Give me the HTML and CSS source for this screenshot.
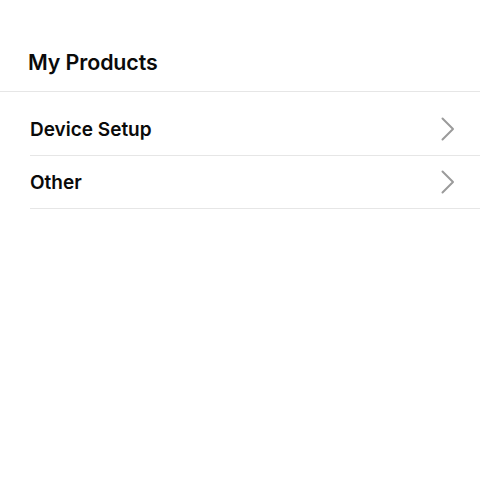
FILE: index.html
```html
<!DOCTYPE html>
<html>
<head>
<meta charset="utf-8">
<link rel="stylesheet" href="styles.css">
</head>
<body>
<header class="header"><h1 class="title">My Products</h1></header>
<ul class="list">
  <li class="row"><span class="label">Device Setup</span>
    <svg class="chev" width="14" height="24" viewBox="0 0 14 24"><path d="M1.5 1.5 L12 12 L1.5 22.5" fill="none" stroke="#9b9b9b" stroke-width="2" stroke-linecap="round" stroke-linejoin="round"/></svg>
  </li>
  <li class="row"><span class="label">Other</span>
    <svg class="chev" width="14" height="24" viewBox="0 0 14 24"><path d="M1.5 1.5 L12 12 L1.5 22.5" fill="none" stroke="#9b9b9b" stroke-width="2" stroke-linecap="round" stroke-linejoin="round"/></svg>
  </li>
</ul>
</body>
</html>
```
FILE: styles.css
```css
html, body { margin: 0; padding: 0; background: #fff; }
body { font-family: Inter, "Noto Sans", sans-serif; color: #0a0a0a; }
.header {
  height: 91px;
  border-bottom: 1px solid #e6e6e6;
  display: flex;
  align-items: flex-start;
  padding-left: 28px;
  box-sizing: content-box;
}
.title {
  margin: 0;
  padding-top: 48px;
  font-size: 21.4px;
  font-weight: 600;
  line-height: 28px;
  letter-spacing: -0.1px;
}
.list { list-style: none; margin: 0; padding: 11px 0 0 30px; }
.row {
  height: 52px;
  border-bottom: 1px solid #e6e6e6;
  display: flex;
  align-items: center;
  justify-content: space-between;
  padding-right: 25px;
}
.label { font-size: 19px; font-weight: 600; letter-spacing: 0; }
.chev { display: block; }
```
